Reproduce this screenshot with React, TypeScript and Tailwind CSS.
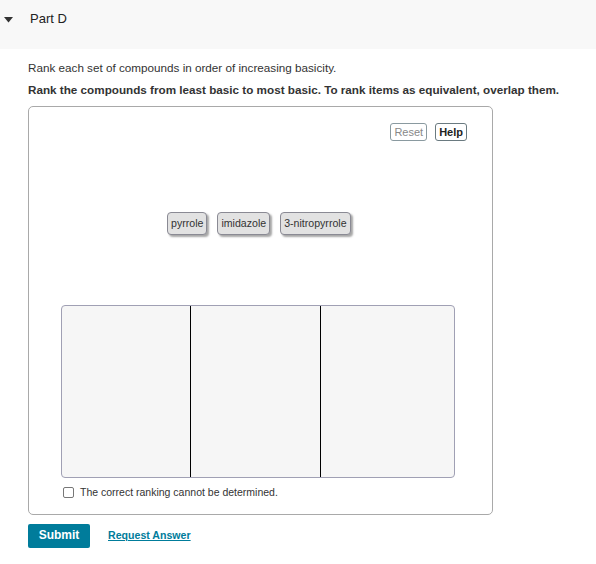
import React from "react";

function Chip({ label }: { label: string }) {
  return (
    <div className="h-[23px] px-[3px] flex items-center rounded-[4px] border border-[#8a8a94] bg-[#e2e2e2] text-[10.6px] text-[#333] shadow-[2px_2px_2px_rgba(0,0,0,0.35)]">
      {label}
    </div>
  );
}

export default function App() {
  return (
    <div className="w-[596px] h-[564px] bg-white text-[#333]" style={{ fontFamily: '"Liberation Sans", Arial, sans-serif' }}>
      <div className="h-[49px] bg-[#f8f8f8] flex items-start pt-[11px]">
        <svg width="9" height="6" viewBox="0 0 9 6" className="ml-[4px] mt-[6px]">
          <polygon points="0,0 9,0 4.5,5.5" fill="#333" />
        </svg>
        <span className="ml-[17px] text-[13px] leading-[16px] text-[#222]">Part D</span>
      </div>
      <div className="pl-[28px]">
        <p className="mt-[12px] text-[11.7px] leading-[14px] text-[#333]">Rank each set of compounds in order of increasing basicity.</p>
        <p className="mt-[8px] text-[11.7px] leading-[14px] font-bold text-[#333]">Rank the compounds from least basic to most basic. To rank items as equivalent, overlap them.</p>
        <div className="mt-[9px] w-[465px] h-[409px] border border-[#a9a9a9] rounded-[5px] flex flex-col">
          <div className="flex justify-end gap-[8px] mt-[16px] mr-[25px]">
            <button className="h-[18px] px-[3px] border border-[#8a9aa0] rounded-[3px] text-[11px] text-[#888] leading-none">Reset</button>
            <button className="h-[18px] px-[3px] border border-[#6a7a80] rounded-[3px] text-[11px] font-bold text-[#222] leading-none">Help</button>
          </div>
          <div className="flex gap-[10px] ml-[138px] mt-[71px]">
            <Chip label="pyrrole" />
            <Chip label="imidazole" />
            <Chip label="3-nitropyrrole" />
          </div>
          <div className="ml-[32px] mt-[70px] w-[394px] h-[173px] border border-[#a0a0b4] rounded-[4px] bg-[#f6f6f6] flex">
            <div className="w-[129px] border-r border-black"></div>
            <div className="w-[130px] border-r border-black"></div>
            <div className="flex-1"></div>
          </div>
          <label className="flex items-center ml-[34px] mt-[7px] gap-[6px]">
            <span className="w-[11px] h-[11px] border border-[#777] rounded-[2px] bg-white"></span>
            <span className="text-[10.5px] text-[#333]">The correct ranking cannot be determined.</span>
          </label>
        </div>
        <div className="flex items-center mt-[9px]">
          <button className="w-[62px] h-[24px] bg-[#007c9b] rounded-[2px] text-white font-bold text-[12px] pb-[2px]">Submit</button>
          <a className="ml-[18px] text-[10.6px] font-bold text-[#007c9b] underline">Request Answer</a>
        </div>
      </div>
    </div>
  );
}
